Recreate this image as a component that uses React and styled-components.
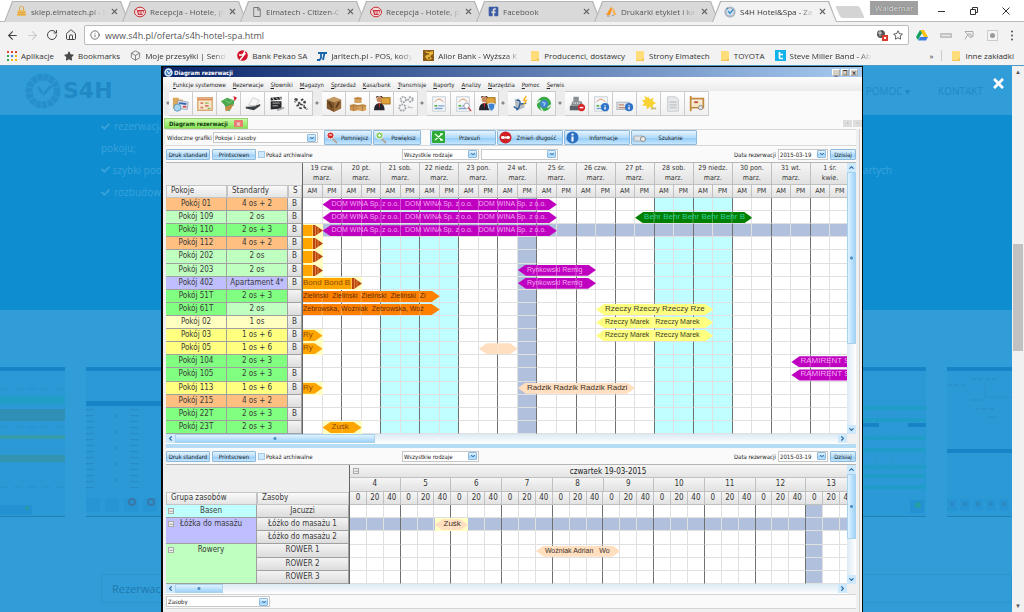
import React from 'react';
import styled, { createGlobalStyle, css } from 'styled-components';
import {
  FaStar,
  FaFacebookSquare,
  FaCheck,
  FaRegStar,
  FaRegFile,
  FaTimes,
} from 'react-icons/fa';
import { ArrowLeft, ArrowRight, RotateCw, House, Info, Box, ChevronDown, X } from 'lucide-react';

const TABS = [
  { title: 'sklep.elmatech.pl - S', icon: 'bag' },
  { title: 'Recepcja - Hotele, p', icon: 'cart' },
  { title: 'Elmatech - Citizen-C', icon: 'file' },
  { title: 'Recepcja - Hotele, p', icon: 'cart' },
  { title: 'Facebook', icon: 'facebook' },
  { title: 'Drukarki etykiet i ka', icon: 'printer' },
  { title: 'S4H Hotel&Spa - Za', icon: 's4h', active: true },
];

const BOOKMARKS = [
  { title: 'Aplikacje', icon: 'apps' },
  { title: 'Bookmarks', icon: 'star' },
  { title: 'Moje przesyłki | Sendi', icon: 'box', long: true },
  { title: 'Bank Pekao SA', icon: 'pekao' },
  { title: 'Jarltech.pl - POS, kody', icon: 'jt', long: true },
  { title: 'Alior Bank - Wyższa K', icon: 'alior', long: true },
  { title: 'Producenci, dostawcy', icon: 'folder' },
  { title: 'Strony Elmatech', icon: 'folder' },
  { title: 'TOYOTA', icon: 'folder' },
  { title: 'Steve Miller Band - Ab', icon: 'twitter', long: true },
];

const MENU = [
  'Funkcje systemowe', 'Rezerwacje', 'Słowniki', 'Magazyn', 'Sprzedaż', 'Kasa/bank',
  'Transmisje', 'Raporty', 'Analizy', 'Narzędzia', 'Pomoc', 'Serwis',
];

const TOOL_GROUPS = [
  ['folder', 'plan', 'map', 'scanner', 'clapper', 'scatter'],
  ['crate', 'boxes', 'manager', 'gears'],
  ['report', 'reportSearch', 'managerShield'],
  ['sync', 'globe'],
  ['register', 'reportInfo', 'cardInfo', 'sun', 'page', 'board'],
];

const COLORS = {
  orange: '#ffbf80',
  mint: '#bfffbf',
  green: '#80ff80',
  violet: '#bfbfff',
  cream: '#ffffbf',
  yellow: '#ffff80',
};

const ROOMS = [
  ['Pokój 01', '4 os + 2', 'B', 'orange'],
  ['Pokój 109', '2 os', 'B', 'mint'],
  ['Pokój 110', '2 os + 3', 'B', 'green'],
  ['Pokój 112', '4 os + 2', 'B', 'orange'],
  ['Pokój 202', '2 os', 'B', 'mint'],
  ['Pokój 203', '2 os', 'B', 'mint'],
  ['Pokój 402', 'Apartament 4*', 'B', 'violet'],
  ['Pokój 51T', '2 os + 3', '', 'green'],
  ['Pokój 61T', '2 os', '', 'green', 'mint'],
  ['Pokój 02', '1 os', 'B', 'cream'],
  ['Pokój 03', '1 os + 6', 'B', 'yellow'],
  ['Pokój 05', '1 os + 6', 'B', 'yellow'],
  ['Pokój 104', '2 os + 3', '', 'green'],
  ['Pokój 105', '2 os + 3', 'B', 'green'],
  ['Pokój 113', '1 os + 6', 'B', 'yellow'],
  ['Pokój 215', '4 os + 2', '', 'orange'],
  ['Pokój 22T', '2 os + 3', 'B', 'green'],
  ['Pokój 23T', '2 os + 3', '', 'green'],
];

const DAYS = [
  '19 czw.', '20 pt.', '21 sob.', '22 niedz.', '23 pon.', '24 wt.', '25 śr.',
  '26 czw.', '27 pt.', '28 sob.', '29 niedz.', '30 pon.', '31 wt.', '1 śr.',
];

const KINDS = {
  purple: { bg: '#c000c0', fg: '#f0a8f0' },
  leaf: { bg: '#008000', fg: '#30d0a0' },
  amber: { bg: '#ffa500', fg: '#8f4a00' },
  dark: { bg: '#ff8000', fg: '#5e2c00' },
  lemon: { bg: '#ffff80', fg: '#40402a' },
  peach: { bg: '#ffdfbf', fg: '#40302a' },
};

const DOM = 'DOM WINA Sp. z o.o.   DOM WINA Sp. z o.o.   DOM WINA Sp. z o.o.';

// from / to are counted in half days
const BOOKINGS = [
  { row: 0, from: 1, to: 13, kind: 'purple', text: DOM, small: true },
  { row: 1, from: 1, to: 13, kind: 'purple', text: DOM, small: true },
  { row: 2, from: 1, to: 13, kind: 'purple', text: DOM, small: true },
  { row: 1, from: 17, to: 23, kind: 'leaf', text: 'Behr Behr Behr Behr Behr B' },
  { row: 2, from: 0, to: 1, kind: 'amber', text: '', left: true, striped: true },
  { row: 3, from: 0, to: 1, kind: 'amber', text: '', left: true, striped: true },
  { row: 4, from: 0, to: 1, kind: 'amber', text: '', left: true, striped: true },
  { row: 5, from: 0, to: 1, kind: 'amber', text: '', left: true, striped: true },
  { row: 6, from: 0, to: 3, kind: 'amber', text: 'Bond Bond B', left: true, striped: true },
  { row: 7, from: 0, to: 7, kind: 'dark', text: 'Zieliński  Zieliński  Zieliński  Zieliński  Zi', left: true, small: true },
  { row: 8, from: 0, to: 7, kind: 'dark', text: 'Żebrowska, Woźniak  Żebrowska, Woź', left: true, small: true },
  { row: 10, from: 0, to: 1, kind: 'amber', text: 'Ry', left: true, glow: true },
  { row: 11, from: 0, to: 1, kind: 'amber', text: 'Ry', left: true, glow: true },
  { row: 14, from: 0, to: 1, kind: 'amber', text: 'Ry', left: true, glow: true },
  { row: 17, from: 1, to: 3, kind: 'amber', text: 'Zuśk', glow: true },
  { row: 5, from: 11, to: 15, kind: 'purple', text: 'Rynkowski Remig', small: true },
  { row: 6, from: 11, to: 15, kind: 'purple', text: 'Rynkowski Remig', small: true },
  { row: 8, from: 15, to: 21, kind: 'lemon', text: 'Rzeczy Rzeczy Rzeczy Rze' },
  { row: 9, from: 15, to: 21, kind: 'lemon', text: 'Rzeczy Marek   Rzeczy Marek', small: true },
  { row: 10, from: 15, to: 21, kind: 'lemon', text: 'Rzeczy Marek   Rzeczy Marek', small: true },
  { row: 11, from: 9, to: 11, kind: 'peach', text: '' },
  { row: 12, from: 25, to: 28, kind: 'purple', text: 'RAMIRENT S', open: true },
  { row: 13, from: 25, to: 28, kind: 'purple', text: 'RAMIRENT S', open: true },
  { row: 14, from: 11, to: 17, kind: 'peach', text: 'Radzik Radzik Radzik Radzi' },
];

const GROUPS = [
  { title: 'Basen', color: '#bfffff', items: ['Jacuzzi'] },
  { title: 'Łóżka do masażu', color: '#bfbfff', items: ['Łóżko do masażu 1', 'Łóżko do masażu 2'] },
  { title: 'Rowery', color: '#bfffbf', items: ['ROWER 1', 'ROWER 2', 'ROWER 3'] },
];

const HOURS = [4, 5, 6, 7, 8, 9, 10, 11, 12, 13];

const RESOURCE_BOOKINGS = [
  { row: 1, from: 5, to: 7, kind: 'peach', text: 'Zuśk', glow: true },
  { row: 3, from: 11, to: 16, kind: 'peach', text: 'Woźniak Adrian   Wo', small: true },
];

const Folder = () => (
  <svg width="10" height="10" viewBox="0 0 10 10">
    <path d="M1 0h7l1 1v9H1z" fill="#ffdd7a" />
    <path d="M7 8l2-1v3H1V9h6z" fill="#f3c653" />
  </svg>
);

const Favicon = ({ name }) => {
  switch (name) {
    case 'bag':
      return (
        <svg width="11" height="11" viewBox="0 0 11 11">
          <path d="M2 4h7l1 6H1z" fill="#f0bd5b" />
          <path d="M3.5 4V2a2 2 0 0 1 4 0v2M1.5 6.5h8M1.5 8.5h8" stroke="#dba44a" fill="none" />
        </svg>
      );
    case 'cart':
      return (
        <svg width="12" height="12" viewBox="0 0 12 12">
          <ellipse cx="6" cy="6" rx="5.500" ry="4.800" fill="#f3dede" stroke="#c8323c" strokeWidth="1" />
          <path d="M0 3h2.500l1.500 6h4.500L10.500 4H3.500z" fill="#c8323c" />
          <path d="M5 5l.4 3M7 5v3M8.800 5l-.5 3" stroke="#fff" strokeWidth=".8" />
        </svg>
      );
    case 'file':
      return <FaRegFile size={10} color="#777" />;
    case 'facebook':
      return <FaFacebookSquare size={11} color="#3b5ba5" />;
    case 'printer':
      return (
        <svg width="11" height="11" viewBox="0 0 11 11">
          <path d="M0 9l5-8 1.500 1L4 9z" fill="#f7931e" />
          <path d="M7.500 2l3 7H8L6.500 5.500z" fill="#f9b04f" />
          <path d="M1 10h3M6 9.500h2" stroke="#999" />
        </svg>
      );
    case 's4h':
      return (
        <svg width="12" height="12" viewBox="0 0 12 12">
          <circle cx="6" cy="6" r="4.600" fill="#d8e2ea" stroke="#a9b6c1" strokeWidth="2" />
          <path d="M3 2l1 1M4 5l2 2.500 3-4" stroke="#2d8fd0" strokeWidth="1.300" fill="none" />
        </svg>
      );
    case 'apps':
      return (
        <svg width="10" height="10" viewBox="0 0 10 10">
          {['#e34133', '#e34133', '#e34133', '#32a350', '#3f7de8', '#f5b400', '#32a350', '#f5b400', '#f5b400'].map((c, i) => (
            <rect key={i} x={(i % 3) * 4} y={Math.floor(i / 3) * 4} width="2" height="2" fill={c} />
          ))}
        </svg>
      );
    case 'star':
      return <FaStar size={10} color="#4a4a4a" />;
    case 'box':
      return <Box size={11} color="#777" />;
    case 'pekao':
      return (
        <svg width="11" height="11" viewBox="0 0 11 11">
          <circle cx="5.500" cy="5.500" r="5.300" fill="#d3132b" />
          <path d="M3 10L8.500 3M2 5l3.500 0L8 1" stroke="#fff" strokeWidth="1.300" fill="none" />
        </svg>
      );
    case 'jt':
      return (
        <svg width="10" height="10" viewBox="0 0 10 10">
          <path d="M1 2h3v5L2.500 9H0M4 2h6M7.500 2L6 9" stroke="#1a64a8" strokeWidth="1.800" fill="none" />
        </svg>
      );
    case 'alior':
      return (
        <svg width="11" height="11" viewBox="0 0 11 11">
          <rect width="11" height="11" fill="#8a5a18" />
          <path d="M2 1l4 1 4-1v3L7 6l2 3-4 1-3-3 2-3z" fill="#e9b53c" />
          <path d="M3 4h3M5 8h2" stroke="#4a2c08" />
        </svg>
      );
    case 'twitter':
      return (
        <svg width="11" height="11" viewBox="0 0 11 11">
          <rect width="11" height="11" fill="#12b3ea" />
          <path d="M4.500 2v5.500q0 1 1 1H8M4.500 4.500H8" stroke="#fff" strokeWidth="1.700" fill="none" />
        </svg>
      );
    default:
      return <Folder />;
  }
};

const man = (
  <>
    <rect x="9" y="3" width="10" height="7" fill="#e0a23a" stroke="#9c6a18" />
    <circle cx="7" cy="5" r="3" fill="#c98a5d" />
    <path d="M3 4q4-5 8 0l-1-3H4z" fill="#3a1d10" />
    <path d="M1 17q0-7 6-8 6 1 6 8z" fill="#25252f" />
    <path d="M6 9h2l-1 6z" fill="#d12b2b" />
  </>
);

const sheet = (
  <>
    <rect x="3" y="2" width="14" height="16" fill="#f4f7f9" stroke="#c5ccd2" />
    <path d="M5 8q5-7 10 0" stroke="#d98b52" fill="none" />
    <rect x="5" y="11" width="3" height="2" fill="#59b655" />
    <path d="M9 12h7M5 15h9" stroke="#7fa5cf" strokeWidth="1.500" />
  </>
);

const info = (
  <>
    <circle cx="14.500" cy="13.500" r="4.500" fill="#2f74c8" />
    <path d="M14.500 11v1M14.500 13v3" stroke="#fff" strokeWidth="1.500" />
  </>
);

const TOOL_SHAPES = {
  folder: (
    <>
      <path d="M1 3h6l1 2h4v10H1z" fill="#dba75a" />
      <path d="M7 6l11 2-1 8-11-1z" fill="#e9eef5" stroke="#93a3b8" />
      <path d="M8 9l8 1" stroke="#3364ad" strokeWidth="2" />
      <path d="M12 13l4 0" stroke="#cd4141" strokeWidth="2" />
      <circle cx="6" cy="14" r="4" fill="#a7d3ec" stroke="#5597bd" />
    </>
  ),
  plan: (
    <>
      <rect x="2" y="3" width="16" height="14" fill="#f8e6c8" stroke="#d9a670" strokeWidth="1.500" />
      <path d="M2 5h16" stroke="#d98a5b" strokeWidth="2" />
      <path d="M5 9h3M10 12h4M5 14h3" stroke="#d47c6c" strokeWidth="2" />
      <path d="M10 9h4M13 15h3" stroke="#8dbb61" strokeWidth="1.500" />
    </>
  ),
  map: (
    <>
      <path d="M1 7l7-4 8 3-1 6-5 1 1 5-4-1-2-6z" fill="#4aa84e" />
      <path d="M6 13l9-3-3 6-6 2z" fill="#c78a49" />
      <path d="M15 1l4 2-3 4z" fill="#d8232f" />
      <path d="M6 6l4 3 4-3" stroke="#8ed08a" fill="none" />
    </>
  ),
  scanner: (
    <>
      <path d="M10 3l7 3-4 7-8-2z" fill="#f6f6f6" stroke="#ccc" />
      <path d="M2 13l11-1 5-2v2l-7 5-9-2z" fill="#3c3f44" />
      <path d="M3 13l10-1" stroke="#bbb" />
    </>
  ),
  clapper: (
    <>
      <path d="M3 3l12-1v3L3 6z" fill="#222" />
      <path d="M5 3l2 3M9 3l2 2M13 2l1 3" stroke="#fff" />
      <path d="M3 7h12v8l-12 1z" fill="#2b2b2e" />
      <path d="M5 9h8M5 12h6" stroke="#bbb" />
      <path d="M10 17l8-3" stroke="#aaa" strokeWidth="2" />
    </>
  ),
  scatter: (
    <>
      <path d="M3 4l3 3M6 4L3 8M10 6l3-2M9 10l5 2M5 12l3-1M13 13l4 3M11 15l-4-1" stroke="#444" strokeWidth="2" strokeDasharray="3 1" />
      <circle cx="14" cy="8" r="1.500" fill="#444" />
      <circle cx="8" cy="9" r="1.500" fill="#555" />
    </>
  ),
  crate: (
    <>
      <path d="M2 5l8-3 8 3-8 3z" fill="#c49a62" />
      <path d="M2 5l8 3v11l-8-4z" fill="#7c5429" />
      <path d="M18 5l-8 3v11l8-4z" fill="#9a6c3a" />
      <path d="M4 8l4 6M12 14l4-6" stroke="#4f3213" strokeWidth="1.500" />
    </>
  ),
  boxes: (
    <>
      <path d="M6 3l4-1 4 1v6H6z" fill="#d5a35e" />
      <path d="M1 11l4-1 5 1v6l-5 1-4-1z" fill="#c99550" />
      <path d="M10 11l5-1 4 1v6l-4 1-5-1z" fill="#d3a15c" />
      <path d="M6 4h8M1 12h18M5 12v5M15 12v5" stroke="#a9793a" />
    </>
  ),
  manager: man,
  managerShield: (
    <>
      {man}
      <path d="M11 10l4-1 4 1q0 6-4 8-4-2-4-8z" fill="#3d84cf" stroke="#e3eefa" />
    </>
  ),
  gears: (
    <>
      <g fill="none" stroke="#9ea4aa" strokeWidth="2" strokeDasharray="2 1">
        <circle cx="7" cy="5" r="3" />
        <circle cx="15" cy="5" r="2.500" />
        <circle cx="6" cy="14" r="3.500" />
      </g>
      <path d="M12 14h6M12 12l3 2" stroke="#b7bcc2" />
    </>
  ),
  report: sheet,
  reportSearch: (
    <>
      {sheet}
      <circle cx="14" cy="12" r="3" fill="#fff" stroke="#99a" />
      <path d="M16 14l3 4" stroke="#c44" strokeWidth="1.500" />
    </>
  ),
  reportInfo: (
    <>
      {sheet}
      {info}
    </>
  ),
  sync: (
    <>
      <path d="M4 5l5-1 1 5 5 0 0 5-7 3-3-4z" fill="#b5bcc4" />
      <path d="M6 6q5-1 4 4t-4 7M11 10l6-1M3 13l5 3" stroke="#2e5f96" strokeWidth="1.500" fill="none" />
      <path d="M17 1l-3 5h3l-3 5" stroke="#f5b321" strokeWidth="1.500" fill="none" />
    </>
  ),
  globe: (
    <>
      <circle cx="10" cy="10" r="8" fill="#39aa46" />
      <circle cx="10" cy="10" r="4.500" fill="#4385cf" />
      <path d="M2 9l4-3M18 11l-4 3M9 18l-3-4" stroke="#d5f2d5" strokeWidth="1.500" />
      <path d="M8 8l3 1-1 3" stroke="#9dd3f6" fill="none" strokeWidth="1.500" />
    </>
  ),
  register: (
    <>
      <path d="M6 2h6v5h3l2 5H3l2-5h1z" fill="#8b9095" />
      <rect x="2" y="12" width="15" height="5" fill="#5c6167" />
      <path d="M6 9h8" stroke="#ddd" strokeDasharray="1 1" strokeWidth="2" />
      <circle cx="15" cy="14" r="4" fill="#d8262b" />
      <path d="M13 14h4" stroke="#fff" strokeWidth="1.500" />
    </>
  ),
  cardInfo: (
    <>
      <rect x="1" y="8" width="14" height="8" fill="#e2e5e8" stroke="#a9aeb5" />
      <path d="M3 11h6M3 14h8" stroke="#c38a71" strokeWidth="1.500" />
      {info}
    </>
  ),
  sun: (
    <>
      <path d="M9 1l2 4 4-2-1 4 4 2-4 2 1 4-4-2-3 3-1-4-5 0 3-3-3-3 4-1-1-4 4 2z" fill="#f8d232" />
      <path d="M12 15h6" stroke="#c8b97a" strokeWidth="2" />
    </>
  ),
  page: (
    <>
      <path d="M4 2h9l3 3v13H4z" fill="#e6e8ea" stroke="#c6c9cc" />
      <path d="M6 8h8M6 11h8M6 14h8" stroke="#c9cccf" strokeWidth="2" />
    </>
  ),
  board: (
    <>
      <path d="M3 1v17M17 3v12M2 4h16M3 14h14" stroke="#c48a3c" strokeWidth="2" />
      <rect x="5" y="6" width="10" height="7" fill="#f3e6c5" />
      <path d="M7 8h4" stroke="#c8453d" strokeWidth="2" />
      <circle cx="14" cy="14" r="2.500" fill="#ddd" stroke="#888" />
    </>
  ),
};

const ActionIcon = ({ name }) => (
  <svg width="13" height="13" viewBox="0 0 13 13">
    {(name === 'minus' || name === 'plus') && (
      <>
        <path d="M6 7l5 5" stroke="#b3a898" strokeWidth="2" />
        <circle cx="4.500" cy="4.500" r="3.500" fill={name === 'plus' ? '#7fd35c' : '#d42a2a'} stroke="#eee" />
        <path d={name === 'plus' ? 'M3 4.500h3M4.500 3v3' : 'M3 4h3'} stroke="#fff" />
      </>
    )}
    {name === 'move' && (
      <>
        <rect width="13" height="12" rx="1" fill="#2faa36" />
        <path d="M3 3l7 6M10 3L3 9M8 3h3M8 9h3" stroke="#e5ffe5" strokeWidth="1.500" />
      </>
    )}
    {name === 'length' && (
      <>
        <circle cx="6.500" cy="6.500" r="6" fill="#cf2026" />
        <path d="M2 6.500h9M4 5v3M9 5v3" stroke="#fff" strokeWidth="1.800" />
      </>
    )}
    {name === 'info' && (
      <>
        <circle cx="6.500" cy="6.500" r="6" fill="#2a6fc0" />
        <path d="M6.500 2.500v2M6.500 5.500v5" stroke="#fff" strokeWidth="2" />
      </>
    )}
    {name === 'search' && (
      <>
        <path d="M1 5h9v5H1z" fill="#dfe3e6" stroke="#a9aeb3" />
        <circle cx="10" cy="8" r="2.500" fill="#eee" stroke="#888" />
      </>
    )}
  </svg>
);

const StripedEnd = () => (
  <svg width="10" height="11" viewBox="0 0 10 11">
    <path d="M0 0h2l8 5.500L2 11H0z" fill="#b8450f" />
    <path d="M2.500 0v11M5 2v7" stroke="#f0a060" strokeWidth=".7" />
  </svg>
);

const Timeline = ({ rows, cols, step, weekend = [], hotRow, hotCol, clearFrom = 0, bookings }) => (
  <Calendar>
    <Layer $rows={rows} $cols={cols}>
      {Array.from({ length: rows * cols }, (_, i) => {
        const row = Math.floor(i / cols);
        const col = i % cols;
        const hot = (row === hotRow && col >= clearFrom) || col === hotCol;
        return (
          <Cell key={i} $hot={hot} $weekend={weekend.includes(col)} $edge={col % step === step - 1} />
        );
      })}
    </Layer>
    <Layer $rows={rows} $cols={cols}>
      {bookings.map((b, i) => (
        <BarSlot
          key={i}
          $glow={b.glow || b.striped}
          style={{ gridRow: b.row + 1, gridColumn: `${b.from + 1} / ${b.to + 1}` }}
        >
          <Bar
            $kind={b.kind}
            $left={b.left}
            $open={b.open || b.striped}
            $small={b.small}
            $span={b.striped ? 1 : b.to - b.from}
          >
            {b.text}
          </Bar>
          {b.striped && <StripedEnd />}
        </BarSlot>
      ))}
    </Layer>
  </Calendar>
);

const Select = ({ label, value, width }) => (
  <SelectBox $width={width}>
    <select aria-label={label} defaultValue={value}>
      <option>{value}</option>
    </select>
    <DropMark>
      <ChevronDown size={6} strokeWidth={4} />
    </DropMark>
  </SelectBox>
);

const PlanBar = ({ id, extra }) => (
  <PlanRow>
    <BlueButton $width={44}>Druk standard</BlueButton>
    <BlueButton $width={44}>Printscreen</BlueButton>
    <Check htmlFor={id}>
      <input id={id} type="checkbox" />
      Pokaż archiwalne
    </Check>
    <PlanFilters>
      <Select label="Rodzaj" value="Wszystkie rodzaje" width={77} />
      {extra && <Select label="Filtr" value="" width={77} />}
    </PlanFilters>
    <span>Data rezerwacji</span>
    <Select label="Data rezerwacji" value="2015-03-19" width={50} />
    <BlueButton $width={26}>Dzisiaj</BlueButton>
  </PlanRow>
);

const ScrollBar = ({ vertical, size }) => (
  <Scroll $vertical={vertical}>
    <ScrollArrow $turn={vertical ? 180 : 90}>
      <ChevronDown size={7} strokeWidth={4} />
    </ScrollArrow>
    <ScrollTrack $vertical={vertical}>
      <ScrollThumb $vertical={vertical} $size={size} />
    </ScrollTrack>
    <ScrollArrow $turn={vertical ? 0 : -90}>
      <ChevronDown size={7} strokeWidth={4} />
    </ScrollArrow>
  </Scroll>
);

function Browser() {
  return (
    <header>
      <TabStrip>
        {TABS.map((tab, i) => (
          <Tab key={i} $active={tab.active}>
            <Favicon name={tab.icon} />
            <TabTitle>{tab.title}</TabTitle>
            <X size={9} strokeWidth={3} color="#666" />
          </Tab>
        ))}
        <NewTab aria-label="Nowa karta" />
        <User>Waldemar</User>
        <WindowControls>
          <svg width="8" height="10"><path d="M0 5.500h7" stroke="#333" /></svg>
          <svg width="8" height="10" fill="none" stroke="#333"><path d="M.5 3.500h5v5h-5zM2.500 3V1.500h5v5H6" /></svg>
          <svg width="8" height="10" stroke="#333"><path d="M.5 1.500l7 7M7.500 1.500l-7 7" /></svg>
        </WindowControls>
      </TabStrip>
      <NavBar>
        <ArrowLeft size={13} color="#444" />
        <ArrowRight size={13} color="#ccc" />
        <RotateCw size={12} color="#444" />
        <House size={12} color="#444" />
        <Address>
          <Info size={10} color="#555" />
          <input aria-label="Adres" defaultValue="www.s4h.pl/oferta/s4h-hotel-spa.html" />
          <svg width="12" height="12" viewBox="0 0 12 12">
            <circle cx="5" cy="5" r="4" fill="#555" />
            <path d="M2 4h4M4 1v6" stroke="#ddd" />
            <rect x="6" y="6" width="6" height="6" fill="#d83b30" />
            <path d="M8 8l2 2M10 8l-2 2" stroke="#fff" />
          </svg>
          <FaRegStar size={10} color="#555" />
        </Address>
        <Extensions>
          <svg width="12" height="11" viewBox="0 0 12 11">
            <path d="M4 0h4l4 7H8z" fill="#fbc215" />
            <path d="M4 0l2 3-4 7L0 7z" fill="#12a05c" />
            <path d="M4 7h8l-2 3.500H2z" fill="#3e7de6" />
          </svg>
          <svg width="12" height="10"><rect y="3" width="12" height="5" fill="#c4c4c4" /><path d="M2 5.500h8" stroke="#eee" /></svg>
          <svg width="11" height="11" fill="none" stroke="#aaa"><path d="M1 1.500h8v5l-3 1zM4 4L1 9.500M4 4h3v3" /></svg>
          <svg width="11" height="11"><rect x=".5" y=".5" width="10" height="10" fill="#f4f4f4" stroke="#ccc" /><circle cx="5.500" cy="5.500" r="2.500" fill="#999" /></svg>
          <svg width="4" height="11" fill="#555"><circle cx="2" cy="1.500" r="1" /><circle cx="2" cy="5.500" r="1" /><circle cx="2" cy="9.500" r="1" /></svg>
        </Extensions>
      </NavBar>
      <BookmarkBar>
        {BOOKMARKS.map(b => (
          <Bookmark key={b.title} href="#">
            <Favicon name={b.icon} />
            <BookmarkTitle $long={b.long}>{b.title}</BookmarkTitle>
          </Bookmark>
        ))}
        <OtherBookmarks>
          <span>»</span>
          <Bookmark href="#" $divided>
            <Folder />
            Inne zakładki
          </Bookmark>
        </OtherBookmarks>
      </BookmarkBar>
    </header>
  );
}

function Site() {
  return (
    <SitePage>
      <SiteHeader>
        <Logo>
          <svg width="36" height="36" viewBox="0 0 36 36" fill="none" stroke="#268fcb">
            <circle cx="18" cy="18" r="14" strokeWidth="7" strokeDasharray="5 1" />
            <path d="M18 22l8-9M13 14l4 6" strokeWidth="3" />
          </svg>
          S4H
        </Logo>
        <nav>
          <a href="#pomoc">POMOC ▾</a>
          <a href="#kontakt">KONTAKT</a>
        </nav>
      </SiteHeader>
      <Features>
        <p><FaCheck size={9} /> rezerwacja</p>
        <p>pokoju;</p>
        <p>
          <span><FaCheck size={9} /> szybki podgląd</span>
          <span>zawartych</span>
        </p>
        <p><FaCheck size={9} /> rozbudowany</p>
      </Features>
      <Gallery>
        <Thumb $width={65}>
          <svg width="65" height="149">
            <rect y="25" width="65" height="8" fill="#229dc8" />
            <rect y="38" width="65" height="12" fill="#2f8fb4" />
            <rect y="64" width="65" height="4" fill="#359dae" />
            <rect y="84" width="65" height="7" fill="#3294ae" />
            <path d="M0 18h65M0 56h65M0 116h65" stroke="#2990cb" strokeDasharray="8 6" />
            <rect y="134" width="32" height="10" fill="#2492d2" />
            <circle cx="27" cy="137" r="2" fill="#279aa0" />
          </svg>
        </Thumb>
        <Thumb $width={76}>
          <svg width="76" height="149">
            <rect y="30" width="76" height="5" fill="#1684c6" />
            <path d="M4 38v84M48 38v84" stroke="#298bc4" strokeWidth="8" strokeDasharray="1 5" />
            <path d="M30 44v80" stroke="#298bc4" strokeWidth="2" strokeDasharray="2 14" />
            <path d="M0 134h76" stroke="#2795d3" strokeWidth="14" strokeDasharray="14 5" />
            <g fill="none" stroke="#3a78aa" strokeWidth="2"><circle cx="46" cy="131" r="3" /><circle cx="65" cy="131" r="3" /></g>
          </svg>
        </Thumb>
        <Thumb $width={73} $end>
          <svg width="73" height="149">
            {[35, 47, 65, 77, 94, 103, 114].map(y => <rect key={y} y={y} width="73" height="4" fill="#209cc9" />)}
            <rect y="52" width="26" height="4" fill="#1684c6" />
            <rect x="55" y="52" width="18" height="4" fill="#1684c6" />
            <path d="M24 38v84M40 38v84" stroke="#298bc4" strokeDasharray="1 5" />
            <rect x="57" y="129" width="14" height="13" fill="#2492d2" />
            <circle cx="65" cy="134" r="3" fill="#24a0a4" />
          </svg>
        </Thumb>
        <Thumb $width={65}>
          <svg width="65" height="149">
            <path d="M0 14h18M24 8h25M24 29h12M28 38h20M42 46h8" stroke="#298bc4" strokeDasharray="5 2" />
            <path d="M38 12v14h27" fill="none" stroke="#2a90cc" />
            <rect y="78" width="65" height="4" fill="#1684c6" />
            <path d="M0 134h65" stroke="#2795d3" strokeWidth="12" strokeDasharray="10 3" />
            <path d="M3 133h62" stroke="#2b89c2" strokeWidth="4" strokeDasharray="4 9" />
          </svg>
        </Thumb>
      </Gallery>
      <Caption>Rezerwacje</Caption>
    </SitePage>
  );
}

function RoomPlan() {
  return (
    <Plan>
      <RoomTable $height={271}>
        <colgroup>
          <col width="61" />
          <col width="61" />
          <col width="14" />
        </colgroup>
        <thead>
          <tr>
            <HeadCell $height={35}><span>Pokoje</span></HeadCell>
            <HeadCell><span>Standardy</span></HeadCell>
            <HeadCell><span>S</span></HeadCell>
          </tr>
        </thead>
        <tbody>
          {ROOMS.map(([room, type, status, color, typeColor]) => (
            <tr key={room}>
              <RoomCell $color={COLORS[color]}>{room}</RoomCell>
              <RoomCell $color={COLORS[typeColor || color]}>{type}</RoomCell>
              <RoomCell>{status}</RoomCell>
            </tr>
          ))}
        </tbody>
      </RoomTable>
      <Viewport>
        <Wide $over={3}>
          <HeadRow $cols={14} $height={22}>
            {DAYS.map((day, i) => (
              <span key={day}>{day}<br />{i === 13 ? 'kwie.' : 'marz.'}</span>
            ))}
          </HeadRow>
          <HeadRow $cols={28} $height={13}>
            {DAYS.flatMap(day => [<span key={day + 'a'}>AM</span>, <span key={day + 'p'}>PM</span>])}
          </HeadRow>
          <Body $height={236}>
            <Timeline
              rows={18}
              cols={28}
              step={2}
              weekend={[4, 5, 6, 7, 18, 19, 20, 21]}
              hotRow={2}
              hotCol={11}
              clearFrom={1}
              bookings={BOOKINGS}
            />
          </Body>
        </Wide>
      </Viewport>
      <ScrollBar vertical size={68} />
    </Plan>
  );
}

function ResourcePlan() {
  return (
    <Plan>
      <RoomTable $height={119}>
        <colgroup>
          <col width="91" />
          <col width="92" />
        </colgroup>
        <thead>
          <tr>
            <HeadCell $height={40}><span>Grupa zasobów</span></HeadCell>
            <HeadCell><span>Zasoby</span></HeadCell>
          </tr>
        </thead>
        <tbody>
          {GROUPS.map(g =>
            g.items.map((item, i) => (
              <tr key={item}>
                {i === 0 && (
                  <RoomCell $color={g.color} rowSpan={g.items.length}>
                    <GroupName><Fold>−</Fold><span>{g.title}</span></GroupName>
                  </RoomCell>
                )}
                <RoomCell>{item}</RoomCell>
              </tr>
            ))
          )}
        </tbody>
      </RoomTable>
      <Viewport>
        <Wide $over={10}>
          <DateRow><Fold>−</Fold><span>czwartek 19-03-2015</span></DateRow>
          <HeadRow $cols={10} $height={14} $large>
            {HOURS.map(h => <span key={h}>{h}</span>)}
          </HeadRow>
          <HeadRow $cols={30} $height={13} $large>
            {HOURS.flatMap(h => [0, 20, 40].map(m => <span key={`${h}:${m}`}>{m}</span>))}
          </HeadRow>
          <Body $height={79}>
            <Timeline rows={6} cols={30} step={3} hotRow={1} hotCol={27} bookings={RESOURCE_BOOKINGS} />
          </Body>
        </Wide>
      </Viewport>
      <ScrollBar vertical size={64} />
    </Plan>
  );
}

function Desk() {
  return (
    <DeskWindow>
      <TitleBar>
        <svg width="9" height="9" viewBox="0 0 9 9"><circle cx="4.500" cy="4.500" r="3.500" fill="#4a86c8" stroke="#dfe8f4" strokeWidth="1.500" /><path d="M3 3l2 3 2-3" stroke="#fff" fill="none" /></svg>
        <span>Diagram rezerwacji</span>
        <TitleButton aria-label="Minimalizuj">_</TitleButton>
        <TitleButton aria-label="Przywróć">❐</TitleButton>
        <TitleButton aria-label="Zamknij">×</TitleButton>
      </TitleBar>
      <MenuBar>
        {MENU.map(m => <button key={m}><u>{m[0]}</u>{m.slice(1)}</button>)}
      </MenuBar>
      <ToolBar>
        {TOOL_GROUPS.map((group, i) => (
          <ToolGroup key={i}>
            {group.map(name => (
              <ToolButton key={name} aria-label={name}>
                <svg width="18" height="18" viewBox="0 0 20 20">{TOOL_SHAPES[name]}</svg>
              </ToolButton>
            ))}
          </ToolGroup>
        ))}
      </ToolBar>
      <DocTabs>
        <DocTab>Diagram rezerwacji <DocClose aria-label="Zamknij kartę">×</DocClose></DocTab>
        <DocArrows><i>‹</i><i>›</i></DocArrows>
      </DocTabs>
      <Main>
        <ActionRow>
          <ActionLabel>Widoczne grafiki</ActionLabel>
          <Select label="Widoczne grafiki" value="Pokoje i zasoby" width={105} />
          <ActionGroup>
            <ActionButton $width={48}><ActionIcon name="minus" /><span>Pomniejsz</span></ActionButton>
            <ActionButton $width={48}><ActionIcon name="plus" /><span>Powiększ</span></ActionButton>
          </ActionGroup>
          <ActionGroup>
            <ActionButton $width={66}><ActionIcon name="move" /><span>Przesuń</span></ActionButton>
            <ActionButton $width={66}><ActionIcon name="length" /><span>Zmień długość</span></ActionButton>
            <ActionButton $width={66}><ActionIcon name="info" /><span>Informacje</span></ActionButton>
            <ActionButton $width={66}><ActionIcon name="search" /><span>Szukanie</span></ActionButton>
          </ActionGroup>
        </ActionRow>
        <PlanBar id="archive-rooms" extra />
        <RoomPlan />
        <ScrollBar size={200} />
        <Splitter />
        <PlanBar id="archive-resources" />
        <ResourcePlan />
        <ScrollBar size={48} />
        <Footer>
          <Select label="Widok" value="Zasoby" width={104} />
        </Footer>
      </Main>
    </DeskWindow>
  );
}

function App() {
  return (
    <Window>
      <GlobalStyle />
      <Browser />
      <Stage>
        <Site />
        <PageScroll>
          <i>▲</i>
          <PageThumb />
          <i>▼</i>
        </PageScroll>
        <Lightbox>
          <Desk />
          <CloseButton aria-label="Zamknij podgląd"><FaTimes size={15} /></CloseButton>
        </Lightbox>
      </Stage>
    </Window>
  );
}

const GlobalStyle = createGlobalStyle`
  * { box-sizing: border-box; }
  body { margin: 0; overflow: hidden; font-family: 'Open Sans', sans-serif; }
  button, input, select { font: inherit; color: inherit; margin: 0; }
  button { padding: 0; border: 0; background: none; }
  a { color: inherit; text-decoration: none; }
  svg { flex: none; }
  i { font-style: normal; }
`;

const Window = styled.div`
  display: flex;
  flex-direction: column;
  height: 100vh;
`;

const TabStrip = styled.div`
  display: flex;
  height: 22px;
  padding: 1px 14px 0 4px;
  background: #fff;
  border-bottom: 1px solid #bbb;
`;

const Tab = styled.div`
  position: relative;
  display: flex;
  align-items: center;
  gap: 4px;
  flex: 0 1 125px;
  min-width: 0;
  height: 21px;
  margin-right: -7px;
  padding: 0 10px 0 12px;
  font-size: 8px;
  color: ${({ $active }) => ($active ? '#333' : '#555')};
  background: #b4b4b4;
  clip-path: polygon(0 100%, 8px 0, calc(100% - 8px) 0, 100% 100%);
  z-index: ${({ $active }) => ($active ? 2 : 1)};

  &::before {
    content: '';
    position: absolute;
    inset: 1px 1px 0;
    z-index: -1;
    background: ${({ $active }) => ($active ? '#f2f2f2' : '#d9d9d9')};
    clip-path: polygon(0 100%, 8px 0, calc(100% - 8px) 0, 100% 100%);
  }
`;

const fade = css`
  overflow: hidden;
  mask-image: linear-gradient(90deg, #000 calc(100% - 14px), transparent);
`;

const TabTitle = styled.span`
  flex: 1;
  min-width: 0;
  white-space: nowrap;
  ${fade}
`;

const BookmarkTitle = styled.span`
  ${({ $long }) => $long && css`
    width: 82px;
    ${fade}
  `}
`;

const NewTab = styled.button`
  width: 24px;
  height: 12px;
  margin: 5px 0 0 8px;
  background: #d4d4d4;
  border-radius: 2px;
  transform: skewX(25deg);
`;

const User = styled.span`
  width: 48px;
  height: 14px;
  margin-left: auto;
  font-size: 8px;
  line-height: 13px;
  text-align: center;
  color: #eee;
  background: #a0a0a0;
  text-shadow: 0 0 1px #333;
`;

const WindowControls = styled.div`
  display: flex;
  align-items: center;
  gap: 24px;
  margin-left: 20px;
`;

const NavBar = styled.div`
  display: flex;
  align-items: center;
  gap: 7px;
  height: 26px;
  padding: 0 10px 0 6px;
  background: #f2f2f2;
`;

const Address = styled.div`
  display: flex;
  flex: 1;
  align-items: center;
  gap: 5px;
  height: 20px;
  padding: 0 5px;
  background: #fff;
  border: 1px solid #bbb;
  border-radius: 2px;

  input {
    flex: 1;
    min-width: 0;
    padding: 0;
    border: 0;
    font-size: 9px;
    color: #555;
  }
`;

const Extensions = styled.div`
  display: flex;
  align-items: center;
  gap: 12px;
`;

const BookmarkBar = styled.nav`
  display: flex;
  align-items: center;
  gap: 10px;
  height: 17px;
  padding: 0 10px 2px 7px;
  font-size: 8px;
  color: #333;
  background: #f2f2f2;
`;

const Bookmark = styled.a`
  display: flex;
  align-items: center;
  gap: 4px;
  white-space: nowrap;
  ${({ $divided }) => $divided && css`
    padding-left: 9px;
    border-left: 1px solid #ccc;
  `}
`;

const OtherBookmarks = styled.div`
  display: flex;
  align-items: center;
  gap: 8px;
  margin-left: auto;
`;

const Stage = styled.main`
  position: relative;
  display: flex;
  flex: 1;
  min-height: 0;
  overflow: hidden;
  border-top: 1px solid #4e9cc6;
`;

const SitePage = styled.div`
  flex: 1;
  min-width: 0;
  background: #309dd8;
`;

const SiteHeader = styled.div`
  display: flex;
  align-items: center;
  justify-content: space-between;
  height: 49px;
  padding: 0 29px 0 25px;
  color: #2188c6;

  nav {
    display: flex;
    gap: 28px;
    font-size: 10px;
  }
`;

const Logo = styled.div`
  display: flex;
  align-items: center;
  gap: 2px;
  font: bold 22px 'DejaVu Sans', sans-serif;
`;

const Features = styled.div`
  height: 195px;
  padding: 0 120px 0 101px;
  background: #0e8ed1;
  color: #3ba2da;
  font-size: 10px;
  line-height: 20px;

  p {
    display: flex;
    align-items: center;
    justify-content: space-between;
    height: 22px;
    margin: 0;
  }

  p:not(:nth-child(3)) {
    justify-content: flex-start;
    gap: 4px;
  }
`;

const Gallery = styled.div`
  display: flex;
  gap: 21px;
  padding-top: 57px;
`;

const Thumb = styled.div`
  width: ${({ $width }) => $width}px;
  height: 150px;
  overflow: hidden;
  margin-left: ${({ $end }) => ($end ? 'auto' : '0')};
  border-top: 4px solid #1684c6;
  border-bottom: 1px solid #2380b5;
  background: #2b99d6;
`;

const Caption = styled.p`
  margin: 57px 0 0 101px;
  padding: 6px 10px;
  font-size: 11px;
  color: #2078ad;
  border: 1px solid #2b95ce;
`;

const PageScroll = styled.div`
  display: flex;
  flex-direction: column;
  justify-content: space-between;
  width: 12px;
  padding: 2px 1px;
  text-align: center;
  font-size: 6px;
  color: #555;
  background: #f1f1f1;
`;

const PageThumb = styled.div`
  height: 107px;
  margin-bottom: 84px;
  background: #c1c1c1;
`;

const Lightbox = styled.div`
  position: absolute;
  inset: -1px 12px 0 0;
  display: flex;
  padding: 0 149px 0 161px;
`;

const CloseButton = styled.button`
  position: absolute;
  top: 9px;
  right: 6px;
  color: #fff;
`;

const DeskWindow = styled.section`
  display: flex;
  flex: 1;
  flex-direction: column;
  min-width: 0;
  overflow: hidden;
  border: solid #0a0a0a;
  border-width: 2px 1px 0 2px;
  background: #f5f5f5;
  font: 6px 'DejaVu Sans Condensed', 'DejaVu Sans', sans-serif;
  color: #222;
  white-space: nowrap;
`;

const TitleBar = styled.div`
  display: flex;
  align-items: center;
  gap: 1px;
  height: 10px;
  padding: 0 4px 0 1px;
  font-weight: bold;
  color: #fff;
  background: linear-gradient(90deg, #0a246a, #a6caf0);

  span {
    flex: 1;
  }
`;

const TitleButton = styled.button`
  width: 8px;
  height: 7px;
  line-height: 6px;
  color: #111;
  background: #d4d0c8;
  border: 1px outset #fff;
`;

const MenuBar = styled.div`
  display: flex;
  align-items: center;
  gap: 7px;
  height: 14px;
  padding-left: 10px;
  background: linear-gradient(#fdfdfd, #ebebeb);
`;

const ToolBar = styled.div`
  display: flex;
  height: 25px;
  padding-left: 1px;
  background: #fafafa;
`;

const ToolGroup = styled.div`
  display: flex;
  padding-left: 9px;
  background: radial-gradient(circle at 4px 12px, #888 1px, #ececec 2px);

  &:first-child {
    padding-left: 5px;
  }
`;

const ToolButton = styled.button`
  display: grid;
  place-items: center;
  width: 24px;
  height: 25px;
  background: linear-gradient(#fff, #f0f0f0);
  border: 1px solid #ccc;
  border-left-width: 0;
`;

const DocTabs = styled.div`
  display: flex;
  align-items: flex-end;
  justify-content: space-between;
  height: 13px;
  padding-left: 1px;
  background: #fafafa;
`;

const DocTab = styled.div`
  display: flex;
  align-items: center;
  gap: 6px;
  height: 11px;
  padding: 0 4px 0 4px;
  font-weight: bold;
  color: #123a12;
  background: linear-gradient(#c9fca4, #86e356);
  border: 1px solid #9bd077;
`;

const DocClose = styled.button`
  width: 9px;
  height: 7px;
  line-height: 6px;
  color: #fff;
  background: #ea7a72;
  border-radius: 1px;
`;

const DocArrows = styled.div`
  display: flex;
  gap: 1px;
  height: 9px;

  i {
    width: 9px;
    height: 7px;
    text-align: center;
    line-height: 6px;
    color: #999;
    background: #ddd;
  }
`;

const Main = styled.div`
  flex: 1;
  margin-right: 2px;
  padding: 0 3px 0 3px;
  background: #f0f0f0;
  border-right: 1px solid #ccc;
`;

const ActionRow = styled.div`
  display: flex;
  align-items: center;
  height: 17px;
  padding-left: 1px;
  background: #fafafa;
  border: 1px solid #d8d8d8;
  border-width: 1px 0;
`;

const ActionLabel = styled.span`
  width: 46px;
`;

const ActionGroup = styled.div`
  display: flex;
  gap: 1px;
  margin-left: 6px;

  & + & {
    margin-left: 9px;
  }
`;

const blue = css`
  background: linear-gradient(#e6f4ff, #b4dcfb 50%, #94ccf7 55%, #c4e6ff);
  border: 1px solid #8cb9dc;
  border-radius: 1px;
`;

const ActionButton = styled.button`
  display: flex;
  align-items: center;
  width: ${({ $width }) => $width}px;
  height: 15px;
  padding: 0 1px;
  ${blue}

  span {
    flex: 1;
    text-align: center;
  }
`;

const BlueButton = styled.button`
  width: ${({ $width }) => $width}px;
  height: 11px;
  line-height: 9px;
  text-align: center;
  ${blue}
`;

const SelectBox = styled.span`
  display: inline-flex;
  align-items: center;
  width: ${({ $width }) => $width}px;
  height: 11px;
  padding-right: 1px;
  background: #fff;
  border: 1px solid #c8c8c8;

  select {
    appearance: none;
    flex: 1;
    min-width: 0;
    height: 9px;
    padding: 0 1px;
    border: 0;
    background: none;
    white-space: nowrap;
  }
`;

const DropMark = styled.span`
  display: grid;
  place-items: center;
  width: 9px;
  height: 8px;
  color: #1b5f9c;
  pointer-events: none;
  ${blue}
`;

const PlanRow = styled.div`
  display: flex;
  align-items: center;
  gap: 2px;
  height: 16px;
  background: #fafafa;
`;

const Check = styled.label`
  display: flex;
  align-items: center;
  gap: 1px;
  width: 142px;

  input {
    appearance: none;
    width: 7px;
    height: 7px;
    background: #cfe8fb;
    border: 1px solid #a5cbe8;
  }
`;

const PlanFilters = styled.div`
  display: flex;
  gap: 2px;
  flex: 1;
`;

const Plan = styled.div`
  display: flex;
  border-top: 1px solid #b5b5b5;
`;

const RoomTable = styled.table`
  flex: none;
  height: ${({ $height }) => $height}px;
  border-collapse: separate;
  border-spacing: 0;
  table-layout: fixed;
  background: #eee;
  font-size: 8px;
  line-height: 11px;
  color: #3a3a3a;
`;

const HeadCell = styled.th`
  height: ${({ $height }) => ($height ? `${$height}px` : 'auto')};
  padding: 0;
  font-weight: normal;
  line-height: 9px;
  text-align: left;
  vertical-align: bottom;

  span {
    display: block;
    height: 13px;
    padding-left: 4px;
    background: linear-gradient(#fafafa, #e4e4e4);
    border: 1px solid #c4c4c4;
  }
`;

const RoomCell = styled.td`
  padding: 0;
  text-align: center;
  vertical-align: top;
  background: ${({ $color }) => $color || 'linear-gradient(#f4f4f4, #dcdcdc)'};
  border: solid #a0a0a0;
  border-width: 0 1px 1px 0;
`;

const GroupName = styled.div`
  display: grid;
  grid-template-columns: 8px 1fr 8px;
  align-items: center;
  padding: 0 2px;
`;

const Fold = styled.i`
  width: 6px;
  height: 6px;
  font-size: 6px;
  line-height: 4px;
  text-align: center;
  color: #555;
  background: #eee;
  border: 1px solid #aaa;
`;

const Viewport = styled.div`
  flex: 1;
  min-width: 0;
  overflow: hidden;
  border-left: 1px solid #666;
`;

const Wide = styled.div`
  width: calc(100% + ${({ $over }) => $over}px);
`;

const HeadRow = styled.div`
  display: grid;
  grid-template-columns: repeat(${({ $cols }) => $cols}, minmax(0, 1fr));
  height: ${({ $height }) => $height}px;
  font-size: ${({ $large }) => ($large ? 8 : 7)}px;
  line-height: ${({ $large, $height }) => ($large || $height < 20 ? 12 : 10)}px;
  text-align: center;
  color: #333;
  background: linear-gradient(#f6f6f6, #e0e0e0);

  span {
    border: solid #c0c0c0;
    border-width: 0 1px 1px 0;
  }
`;

const DateRow = styled.div`
  display: flex;
  align-items: center;
  height: 13px;
  padding-left: 3px;
  font-size: 8px;
  background: linear-gradient(#f6f6f6, #e4e4e4);
  border-bottom: 1px solid #c0c0c0;

  span {
    flex: 1;
    text-align: center;
  }
`;

const Body = styled.div`
  height: ${({ $height }) => $height}px;
`;

const Calendar = styled.div`
  display: grid;
  height: 100%;
`;

const Layer = styled.div`
  display: grid;
  grid-area: 1 / 1;
  grid-template-columns: repeat(${({ $cols }) => $cols}, minmax(0, 1fr));
  grid-template-rows: repeat(${({ $rows }) => $rows}, minmax(0, 1fr));
`;

const Cell = styled.i`
  background: ${({ $hot, $weekend }) => ($hot ? '#b0c0dd' : $weekend ? '#bfffff' : '#fff')};
  border-right: 1px solid ${({ $edge }) => ($edge ? '#707070' : '#e0e0e0')};
  border-bottom: 1px solid #e0e0e0;
`;

const BarSlot = styled.div`
  display: flex;
  padding: 1px 0;
  background: ${({ $glow }) => ($glow ? '#ffffc4' : 'none')};
`;

const tips = ({ $left, $open }) => {
  if ($left && $open) return 'none';
  if ($left) return 'polygon(0 0, calc(100% - 8px) 0, 100% 50%, calc(100% - 8px) 100%, 0 100%)';
  if ($open) return 'polygon(0 50%, 8px 0, 100% 0, 100% 100%, 8px 100%)';
  return 'polygon(0 50%, 8px 0, calc(100% - 8px) 0, 100% 50%, calc(100% - 8px) 100%, 8px 100%)';
};

// the hairlines repeat the half-day grid over the bar
const Bar = styled.div`
  flex: 1;
  min-width: 0;
  padding-left: ${({ $left }) => ($left ? 0 : 9)}px;
  overflow: hidden;
  font: ${({ $small }) => ($small ? 7 : 8)}px 'Liberation Sans', sans-serif;
  line-height: 10px;
  white-space: pre;
  color: ${({ $kind }) => KINDS[$kind].fg};
  background-color: ${({ $kind }) => KINDS[$kind].bg};
  background-image: linear-gradient(90deg, transparent calc(100% - 1px), #ffffff55 0);
  background-size: calc(100% / ${({ $span }) => $span}) 100%;
  clip-path: ${tips};
`;

const Scroll = styled.div`
  display: flex;
  flex: none;
  flex-direction: ${({ $vertical }) => ($vertical ? 'column' : 'row')};
  width: ${({ $vertical }) => ($vertical ? '9px' : 'calc(100% - 9px)')};
  height: ${({ $vertical }) => ($vertical ? 'auto' : '10px')};
  background: #fff;
`;

const ScrollArrow = styled.button`
  display: grid;
  place-items: center;
  width: 9px;
  height: 9px;
  color: #2a6ca8;
  background: #cfe9fc;

  svg {
    transform: rotate(${({ $turn }) => $turn}deg);
  }
`;

const ScrollTrack = styled.div`
  flex: 1;
  background: linear-gradient(${({ $vertical }) => ($vertical ? '90deg' : '180deg')}, #dceaf4, #fff);
`;

const ScrollThumb = styled.div`
  width: ${({ $vertical, $size }) => ($vertical ? '9px' : `${$size}px`)};
  height: ${({ $vertical, $size }) => ($vertical ? `${$size}%` : '9px')};
  background:
    radial-gradient(circle, #4a8fc4 1px, transparent 2px),
    linear-gradient(${({ $vertical }) => ($vertical ? '90deg' : '180deg')}, #e0f2ff, #9fd3f8);
  border: 1px solid #a9d2ef;
`;

const Splitter = styled.div`
  height: 4px;
  background: #b5dcf5;
`;

const Footer = styled.div`
  display: flex;
  align-items: center;
  height: 15px;
  background: #fafafa;
  border: 1px solid #d4d4d4;
  border-width: 1px 0;
`;

export default App;
